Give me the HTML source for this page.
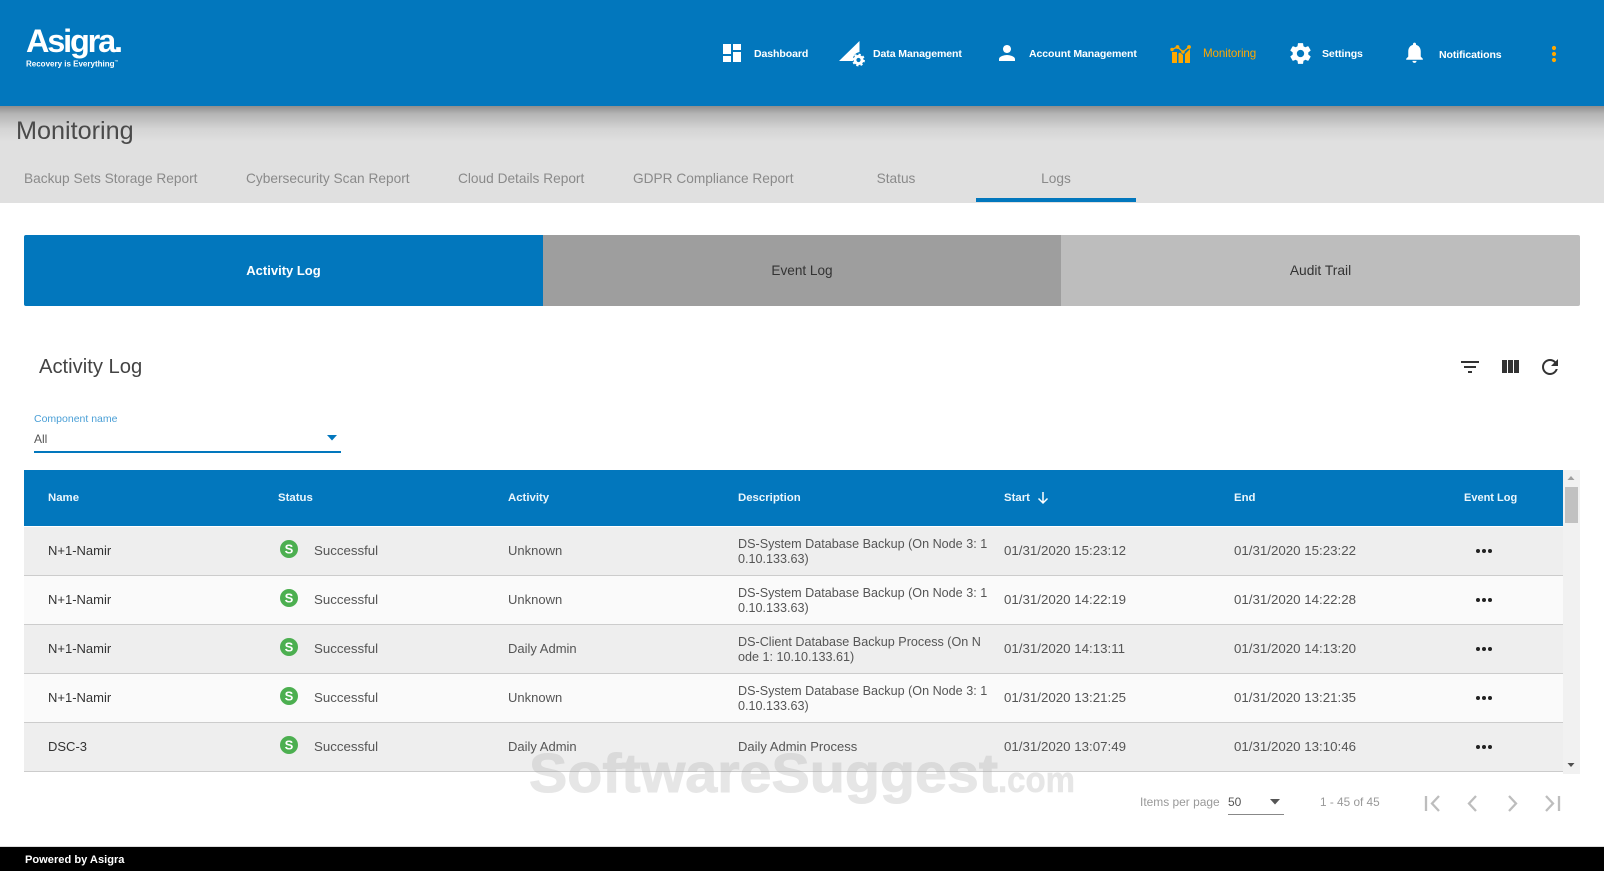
<!DOCTYPE html>
<html><head><meta charset="utf-8">
<style>
*{box-sizing:border-box;margin:0;padding:0}
html,body{width:1604px;height:871px;overflow:hidden;background:#fff;font-family:"Liberation Sans",sans-serif}
.t{position:absolute;white-space:nowrap;line-height:16px;font-size:13px;color:#555}
.a{position:absolute}
.nav{color:#fff;font-size:10.55px;font-weight:bold;letter-spacing:-.1px}
.sub{color:#8a8a8a;font-size:13.7px;text-align:center}
.th{color:#eaf6fd;font-size:11.4px;font-weight:bold;top:490px}
.row{position:absolute;left:24px;width:1539px;height:49px;border-bottom:1px solid #ccc}
.d{line-height:15px;font-size:12.6px}
.s{font-size:13.25px}
.dt{font-size:13.3px}
</style></head><body>

<div class="a" style="left:0;top:106px;width:1604px;height:97px;background:#e0e0e0"></div>
<div class="a" style="left:0;top:106px;width:1604px;height:35px;background:linear-gradient(#8d8d8d 0,#b4b4b4 22%,#d4d4d4 65%,#dfdfdf 100%)"></div>
<div class="a" style="left:0;top:0;width:1604px;height:106px;background:#0277bd"></div>

<div class="t" style="left:26px;top:23px;font-size:32.5px;line-height:36px;font-weight:bold;color:#fff;letter-spacing:-2.2px">Asigra.</div>
<div class="t" style="left:26px;top:55px;font-size:8px;line-height:14px;font-weight:bold;color:#fff">Recovery is Everything<sup style="font-size:4px">™</sup></div>

<svg class="a" style="left:720px;top:41px" width="24" height="24" viewBox="0 0 24 24"><path fill="#fff" d="M3 13h8V3H3v10zm0 8h8v-6H3v6zm10 0h8V11h-8v10zm0-18v6h8V3h-8z"/></svg>
<div class="t nav" style="left:754px;top:46px">Dashboard</div>
<svg class="a" style="left:836px;top:38px" width="34" height="30" viewBox="0 0 34 30"><path fill="#fff" d="M3 23 L23.500 3 L23.500 14 C19 15 16.500 18 17 23 Z"/><circle cx="22.500" cy="22" r="3.600" fill="none" stroke="#fff" stroke-width="3"/><circle cx="22.500" cy="22" r="5.500" fill="none" stroke="#fff" stroke-width="1.800" stroke-dasharray="2.200 2.100"/></svg>
<div class="t nav" style="left:873px;top:46px">Data Management</div>
<svg class="a" style="left:995px;top:41px" width="24" height="24" viewBox="0 0 24 24"><path fill="#fff" d="M12 12c2.210 0 4-1.790 4-4s-1.790-4-4-4-4 1.790-4 4 1.790 4 4 4zm0 2c-2.670 0-8 1.340-8 4v2h16v-2c0-2.660-5.330-4-8-4z"/></svg>
<div class="t nav" style="left:1029px;top:46px">Account Management</div>
<svg class="a" style="left:1170px;top:44px" width="22" height="20" viewBox="0 0 22 20"><path fill="#ffa800" d="M2 8h5v11H2zM8.500 9.500l1.500-1 3 2.500V19H8.500zM15 10l5-5V19h-5z"/><path fill="none" stroke="#ffa800" stroke-width="1.400" d="M2 5.500 7.500 3 13 8 19 3"/><circle cx="2" cy="5.500" r="1.700" fill="#ffa800"/><circle cx="7.500" cy="3" r="1.900" fill="#ffa800"/><circle cx="13" cy="8" r="1.700" fill="#ffa800"/><circle cx="19" cy="3" r="1.900" fill="#ffa800"/></svg>
<div class="t nav" style="left:1203px;top:46px;color:#ffa800;font-weight:normal;font-size:11.6px">Monitoring</div>
<svg class="a" style="left:1288px;top:41px" width="25" height="25" viewBox="0 0 24 24"><path fill="#fff" d="M19.430 12.980c.040-.320.070-.640.070-.980s-.030-.660-.070-.980l2.110-1.650c.190-.150.240-.420.120-.640l-2-3.460c-.120-.220-.390-.300-.610-.220l-2.490 1c-.520-.400-1.080-.730-1.690-.980l-.380-2.650C14.460 2.180 14.250 2 14 2h-4c-.250 0-.460.180-.490.420l-.380 2.650c-.610.250-1.170.590-1.690.980l-2.490-1c-.230-.090-.490 0-.610.220l-2 3.460c-.130.220-.070.490.120.640l2.110 1.650c-.040.320-.070.650-.070.980s.030.660.070.980l-2.110 1.650c-.190.150-.240.420-.120.640l2 3.460c.120.220.390.300.610.220l2.490-1c.520.400 1.080.730 1.690.980l.380 2.650c.030.240.240.420.490.420h4c.250 0 .460-.180.490-.420l.380-2.650c.610-.250 1.170-.590 1.690-.980l2.490 1c.230.090.490 0 .610-.220l2-3.460c.120-.220.070-.490-.120-.640l-2.110-1.650zM12 15.500c-1.930 0-3.500-1.570-3.500-3.500s1.570-3.500 3.500-3.500 3.500 1.570 3.500 3.500-1.570 3.500-3.500 3.500z"/></svg>
<div class="t nav" style="left:1322px;top:46px">Settings</div>
<svg class="a" style="left:1402px;top:40px" width="25" height="25" viewBox="0 0 24 24"><path fill="#fff" d="M12 22c1.100 0 2-.900 2-2h-4c0 1.100.890 2 2 2zm6-6v-5c0-3.070-1.640-5.640-4.500-6.320V4c0-.830-.670-1.500-1.500-1.500s-1.500.670-1.500 1.500v.680C7.630 5.360 6 7.920 6 11v5l-2 2v1h16v-1l-2-2z"/></svg>
<div class="t nav" style="left:1439px;top:47px">Notifications</div>
<svg class="a" style="left:1549px;top:44px" width="10" height="20"><circle cx="5" cy="4" r="2.100" fill="#ffa800"/><circle cx="5" cy="10" r="2.100" fill="#ffa800"/><circle cx="5" cy="16" r="2.100" fill="#ffa800"/></svg>

<div class="t" style="left:16px;top:116px;font-size:25.200px;line-height:30px;color:#4a4a4a">Monitoring</div>
<div class="t sub" style="left:24px;top:171px">Backup Sets Storage Report</div>
<div class="t sub" style="left:246px;top:171px">Cybersecurity Scan Report</div>
<div class="t sub" style="left:458px;top:171px">Cloud Details Report</div>
<div class="t sub" style="left:633px;top:171px">GDPR Compliance Report</div>
<div class="t sub" style="left:816px;width:160px;top:171px">Status</div>
<div class="t sub" style="left:976px;width:160px;top:171px">Logs</div>
<div class="a" style="left:976px;top:198px;width:160px;height:4px;background:#0277bd"></div>

<div class="a" style="left:24px;top:235px;width:519px;height:71px;background:#0277bd;border-radius:2px 0 0 2px"></div>
<div class="a" style="left:543px;top:235px;width:518px;height:71px;background:#9e9e9e"></div>
<div class="a" style="left:1061px;top:235px;width:519px;height:71px;background:#bdbdbd;border-radius:0 2px 2px 0"></div>
<div class="t" style="left:24px;width:519px;top:263px;text-align:center;color:#fff;font-size:13px;font-weight:bold">Activity Log</div>
<div class="t" style="left:543px;width:518px;top:263px;text-align:center;color:#333;font-size:13.600px">Event Log</div>
<div class="t" style="left:1061px;width:519px;top:263px;text-align:center;color:#333;font-size:13.800px">Audit Trail</div>

<div class="t" style="left:39px;top:355px;font-size:20.200px;line-height:24px;color:#444">Activity Log</div>
<svg class="a" style="left:1458px;top:355px" width="24" height="24" viewBox="0 0 24 24"><path fill="#333" d="M10 18h4v-2h-4v2zM3 6v2h18V6H3zm3 7h12v-2H6v2z"/></svg>
<svg class="a" style="left:1498px;top:355px" width="24" height="24" viewBox="0 0 24 24"><path fill="#333" d="M10 18h5V5h-5v13zm-6 0h5V5H4v13zM16 5v13h5V5h-5z"/></svg>
<svg class="a" style="left:1538px;top:355px" width="24" height="24" viewBox="0 0 24 24"><path fill="#333" d="M17.650 6.350C16.200 4.900 14.210 4 12 4c-4.420 0-7.990 3.580-7.990 8s3.570 8 7.990 8c3.730 0 6.840-2.550 7.730-6h-2.080c-.820 2.330-3.040 4-5.650 4-3.310 0-6-2.690-6-6s2.690-6 6-6c1.660 0 3.140.690 4.220 1.780L13 11h7V4l-2.350 2.350z"/></svg>

<div class="t" style="left:34px;top:411px;font-size:10.500px;color:#4a9fd6">Component name</div>
<div class="t" style="left:34px;top:431px;font-size:12px;color:#555">All</div>
<svg class="a" style="left:326px;top:435px" width="12" height="7"><path d="M1 0h10L6 5.500z" fill="#0277bd"/></svg>
<div class="a" style="left:34px;top:451px;width:307px;height:2px;background:#0277bd"></div>

<div class="a" style="left:24px;top:470px;width:1539px;height:56px;background:#0277bd"></div>
<div class="a" style="left:1563px;top:470px;width:17px;height:304px;background:#f1f1f1"></div>
<div class="a" style="left:1565px;top:487px;width:13px;height:36px;background:#c1c1c1"></div>
<svg class="a" style="left:1564px;top:474px" width="14" height="8"><path d="M3.500 6h7L7 2z" fill="#a0a0a0"/></svg>
<svg class="a" style="left:1564px;top:761px" width="14" height="8"><path d="M3.500 2h7L7 6z" fill="#505050"/></svg>

<div class="t th" style="left:48px">Name</div>
<div class="t th" style="left:278px">Status</div>
<div class="t th" style="left:508px">Activity</div>
<div class="t th" style="left:738px">Description</div>
<div class="t th" style="left:1004px">Start</div>
<svg class="a" style="left:1036px;top:490px" width="14" height="16" viewBox="0 0 14 16"><path d="M7 2v11M2.500 8.500 7 13l4.500-4.500" fill="none" stroke="#fff" stroke-width="1.500"/></svg>
<div class="t th" style="left:1234px">End</div>
<div class="t th" style="left:1464px;font-size:11px">Event Log</div>

<div class="row" style="top:527px;background:#eee"></div>
<div class="row" style="top:576px;background:#fafafa"></div>
<div class="row" style="top:625px;background:#eee"></div>
<div class="row" style="top:674px;background:#fafafa"></div>
<div class="row" style="top:723px;background:#eee"></div>

<div class="t" style="left:48px;top:543px;color:#333">N+1-Namir</div>
<svg class="a" style="left:280px;top:540px" width="18" height="18"><circle cx="9" cy="9" r="9" fill="#4caf50"/><text x="9" y="13.500" text-anchor="middle" font-family="Liberation Sans" font-weight="bold" font-size="13" fill="#fff">S</text></svg>
<div class="t s" style="left:314px;top:543px">Successful</div>
<div class="t" style="left:508px;top:543px">Unknown</div>
<div class="t d" style="left:738px;top:537px">DS-System Database Backup (On Node 3: 1<br>0.10.133.63)</div>
<div class="t dt" style="left:1004px;top:543px">01/31/2020 15:23:12</div>
<div class="t dt" style="left:1234px;top:543px">01/31/2020 15:23:22</div>
<svg class="a" style="left:1474px;top:547px" width="20" height="8"><circle cx="4" cy="4" r="2" fill="#222"/><circle cx="10" cy="4" r="2" fill="#222"/><circle cx="16" cy="4" r="2" fill="#222"/></svg>

<div class="t" style="left:48px;top:592px;color:#333">N+1-Namir</div>
<svg class="a" style="left:280px;top:589px" width="18" height="18"><circle cx="9" cy="9" r="9" fill="#4caf50"/><text x="9" y="13.500" text-anchor="middle" font-family="Liberation Sans" font-weight="bold" font-size="13" fill="#fff">S</text></svg>
<div class="t s" style="left:314px;top:592px">Successful</div>
<div class="t" style="left:508px;top:592px">Unknown</div>
<div class="t d" style="left:738px;top:586px">DS-System Database Backup (On Node 3: 1<br>0.10.133.63)</div>
<div class="t dt" style="left:1004px;top:592px">01/31/2020 14:22:19</div>
<div class="t dt" style="left:1234px;top:592px">01/31/2020 14:22:28</div>
<svg class="a" style="left:1474px;top:596px" width="20" height="8"><circle cx="4" cy="4" r="2" fill="#222"/><circle cx="10" cy="4" r="2" fill="#222"/><circle cx="16" cy="4" r="2" fill="#222"/></svg>

<div class="t" style="left:48px;top:641px;color:#333">N+1-Namir</div>
<svg class="a" style="left:280px;top:638px" width="18" height="18"><circle cx="9" cy="9" r="9" fill="#4caf50"/><text x="9" y="13.500" text-anchor="middle" font-family="Liberation Sans" font-weight="bold" font-size="13" fill="#fff">S</text></svg>
<div class="t s" style="left:314px;top:641px">Successful</div>
<div class="t" style="left:508px;top:641px">Daily Admin</div>
<div class="t d" style="left:738px;top:635px">DS-Client Database Backup Process (On N<br>ode 1: 10.10.133.61)</div>
<div class="t dt" style="left:1004px;top:641px">01/31/2020 14:13:11</div>
<div class="t dt" style="left:1234px;top:641px">01/31/2020 14:13:20</div>
<svg class="a" style="left:1474px;top:645px" width="20" height="8"><circle cx="4" cy="4" r="2" fill="#222"/><circle cx="10" cy="4" r="2" fill="#222"/><circle cx="16" cy="4" r="2" fill="#222"/></svg>

<div class="t" style="left:48px;top:690px;color:#333">N+1-Namir</div>
<svg class="a" style="left:280px;top:687px" width="18" height="18"><circle cx="9" cy="9" r="9" fill="#4caf50"/><text x="9" y="13.500" text-anchor="middle" font-family="Liberation Sans" font-weight="bold" font-size="13" fill="#fff">S</text></svg>
<div class="t s" style="left:314px;top:690px">Successful</div>
<div class="t" style="left:508px;top:690px">Unknown</div>
<div class="t d" style="left:738px;top:684px">DS-System Database Backup (On Node 3: 1<br>0.10.133.63)</div>
<div class="t dt" style="left:1004px;top:690px">01/31/2020 13:21:25</div>
<div class="t dt" style="left:1234px;top:690px">01/31/2020 13:21:35</div>
<svg class="a" style="left:1474px;top:694px" width="20" height="8"><circle cx="4" cy="4" r="2" fill="#222"/><circle cx="10" cy="4" r="2" fill="#222"/><circle cx="16" cy="4" r="2" fill="#222"/></svg>

<div class="t" style="left:48px;top:739px;color:#333">DSC-3</div>
<svg class="a" style="left:280px;top:736px" width="18" height="18"><circle cx="9" cy="9" r="9" fill="#4caf50"/><text x="9" y="13.500" text-anchor="middle" font-family="Liberation Sans" font-weight="bold" font-size="13" fill="#fff">S</text></svg>
<div class="t s" style="left:314px;top:739px">Successful</div>
<div class="t" style="left:508px;top:739px">Daily Admin</div>
<div class="t" style="left:738px;top:739px">Daily Admin Process</div>
<div class="t dt" style="left:1004px;top:739px">01/31/2020 13:07:49</div>
<div class="t dt" style="left:1234px;top:739px">01/31/2020 13:10:46</div>
<svg class="a" style="left:1474px;top:743px" width="20" height="8"><circle cx="4" cy="4" r="2" fill="#222"/><circle cx="10" cy="4" r="2" fill="#222"/><circle cx="16" cy="4" r="2" fill="#222"/></svg>

<svg class="a" style="left:510px;top:740px" width="580" height="70"><g opacity=".28"><text x="19" y="52" font-family="Liberation Sans" font-weight="bold" font-size="55" textLength="469" lengthAdjust="spacingAndGlyphs" fill="#a8a8a8" stroke="#a8a8a8" stroke-width="1">SoftwareSuggest</text><text x="488" y="52" font-family="Liberation Sans" font-weight="bold" font-size="36" textLength="77" lengthAdjust="spacingAndGlyphs" fill="#a8a8a8" stroke="#a8a8a8" stroke-width=".6">.com</text></g></svg>

<div class="t" style="left:1140px;top:794px;font-size:11.950px;color:#999">Items per page</div>
<div class="t" style="left:1228px;top:794px;font-size:12px;color:#555">50</div>
<svg class="a" style="left:1269px;top:799px" width="12" height="7"><path d="M1 0h10L6 5.500z" fill="#555"/></svg>
<div class="a" style="left:1228px;top:814px;width:56px;height:1px;background:#888"></div>
<div class="t" style="left:1320px;top:794px;font-size:11.800px;color:#999">1 - 45 of 45</div>
<svg class="a" style="left:1420px;top:792px" width="150" height="22" fill="none" stroke="#bdbdbd" stroke-width="2.300"><path d="M6 4v15M19 4l-7 7.500 7 7.500M56 4l-7 7.500 7 7.500M89 4l7 7.500-7 7.500M126 4l7 7.500-7 7.500M139 4v15"/></svg>

<div class="a" style="left:0;top:846px;width:1604px;height:25px;background:#000;border-top:1px solid #ddd"></div>
<div class="t" style="left:25px;top:852px;font-size:11.100px;font-weight:bold;color:#fff">Powered by Asigra</div>
</body></html>
